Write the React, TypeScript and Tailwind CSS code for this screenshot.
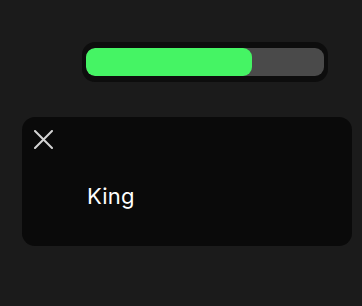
import React from "react";

export default function App() {
  const pct = 166 / 238;
  return (
    <div className="w-[362px] h-[306px] bg-[#1b1b1b] pt-[42px]" style={{ fontFamily: "Inter, 'Noto Sans', sans-serif" }}>
      <div className="ml-[82px] w-[246px] h-[40px] p-[6px_4px] rounded-[13px] bg-[#0d0d0d] flex items-center">
        <div className="w-[238px] h-[28px] rounded-[9px] bg-[#4a4a4a] overflow-hidden">
          <div className="h-full rounded-[9px] bg-[#45f464]" style={{ width: `${pct * 100}%` }} />
        </div>
      </div>
      <div className="mt-[35px] ml-[22px] w-[330px] h-[129px] rounded-[13px] bg-[#0a0a0a] pt-[13px] pl-[12px]">
        <svg width="19" height="19" viewBox="0 0 19 19" className="block">
          <path d="M1 1 L18 18 M18 1 L1 18" stroke="#d4d4d4" strokeWidth="2" strokeLinecap="round" />
        </svg>
        <div className="ml-[53px] mt-[32px] text-[22px] leading-[30px] tracking-[0.2px] text-white">King</div>
      </div>
    </div>
  );
}
